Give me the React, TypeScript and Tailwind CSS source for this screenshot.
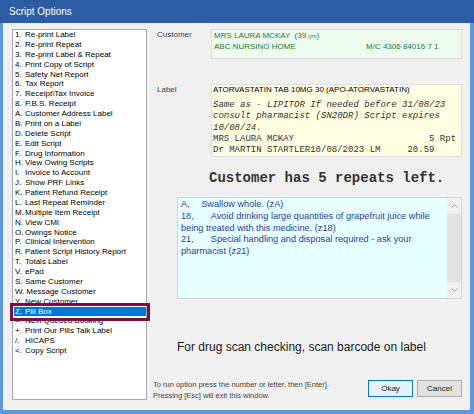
import React from "react";

const items: [string, string][] = [
  ["1.", "Re-print Label"],
  ["2.", "Re-print Repeat"],
  ["3.", "Re-print Label & Repeat"],
  ["4.", "Print Copy of Script"],
  ["5.", "Safety Net Report"],
  ["6.", "Tax Report"],
  ["7.", "Receipt\\Tax Invoice"],
  ["8.", "P.B.S. Receipt"],
  ["A.", "Customer Address Label"],
  ["B.", "Print on a Label"],
  ["D.", "Delete Script"],
  ["E.", "Edit Script"],
  ["F.", "Drug Information"],
  ["H.", "View Owing Scripts"],
  ["I.", "Invoice to Account"],
  ["J.", "Show PRF Links"],
  ["K.", "Patient Refund Receipt"],
  ["L.", "Last Repeat Reminder"],
  ["M.", "Multiple Item Receipt"],
  ["N.", "View CMI"],
  ["O.", "Owings Notice"],
  ["P.", "Clinical Intervention"],
  ["R.", "Patient Script History Report"],
  ["T.", "Totals Label"],
  ["V.", "ePad"],
  ["S.", "Same Customer"],
  ["W.", "Message Customer"],
  ["Y.", "New Customer"],
  ["Z.", "Pill Box"],
  ["=.", "Next Queued Booking"],
  ["+.", "Print Our Pills Talk Label"],
  ["/.", "HICAPS"],
  ["<.", "Copy Script"],
];

export default function App() {
  return (
    <div className="w-[474px] h-[414px] flex flex-col bg-[#5b98e0] font-['Liberation_Sans',Arial,sans-serif] overflow-hidden">
      <div className="h-[23px] bg-[#2c5ca3] text-white text-[10px] pl-[9px] flex items-center shrink-0">
        Script Options
      </div>
      <div className="flex-1 ml-[3px] mr-[4px] mb-[4px] bg-[#f0f0f0] flex">
        {/* List */}
        <div className="pl-[9px] pt-[6px] shrink-0">
          <div className="relative w-[135px] h-[371px] bg-white border border-[#a8a8a8] pl-[1px] text-[8px] text-black">
            {items.map(([k, t]) => {
              const sel = k === "Z.";
              return (
                <div
                  key={k}
                  className={
                    "h-[9.875px] leading-[9.875px] pl-[1px] whitespace-pre flex " +
                    (sel ? "bg-[#0078d7] text-white" : "")
                  }
                >
                  <span className={"inline-block min-w-[10px] " + (k === "W." ? "pr-[2px]" : "")}>{k}</span>
                  <span>{t}</span>
                </div>
              );
            })}
            <div className="absolute left-[-3px] top-[273px] w-[140px] h-[18px] border-[3px] border-[#7b0f45]" />
          </div>
        </div>
        {/* Right panel */}
        <div className="flex-1 flex flex-col text-[8px]">
          {/* Customer */}
          <div className="flex mt-[6px]">
            <div className="w-[64px] pl-[10px] pt-[1px] leading-[10px] text-[#404040]">Customer</div>
            <div className="w-[251px] h-[30px] bg-[#eefcf0] border border-[#dcdcdc] pl-[2px] pt-[1px] text-[#1f7a2e] leading-[9.5px]">
              <div className="whitespace-pre">
                MRS LAURA MCKAY  (39 <span className="text-[6px]">yrs</span>)
              </div>
              <div className="flex">
                <span className="w-[152px]">ABC NURSING HOME</span>
                <span>M/C 4306 84016 7 1</span>
              </div>
            </div>
          </div>
          {/* Label */}
          <div className="flex mt-[25px]">
            <div className="w-[64px] pl-[10px] pt-[1px] leading-[10px] text-[#404040]">Label</div>
            <div className="w-[251px] h-[73px] bg-[#fffde2] border border-[#dcdcdc] pl-[1px] pt-0 text-black">
              <div className="leading-[10px]">ATORVASTATIN TAB 10MG 30 (APO-ATORVASTATIN)</div>
              <div className="mt-[5px] font-['Liberation_Mono','Courier_New',monospace] text-[9px] leading-[11.3px] text-[#333] whitespace-pre">
                <div className="italic">Same as - LIPITOR If needed before 31/08/23</div>
                <div className="italic">consult pharmacist (SN20DR) Script expires</div>
                <div className="italic">10/08/24.</div>
                <div>MRS LAURA MCKAY                         5 Rpt</div>
                <div>Dr MARTIN STARTLER10/08/2023 LM     20.59</div>
              </div>
            </div>
          </div>
          {/* Repeats */}
          <div className="mt-[13px] pl-[62px] font-['Liberation_Mono','Courier_New',monospace] font-bold text-[14px] leading-[16px] text-[#333] whitespace-pre">
            Customer has 5 repeats left.
          </div>
          {/* Blue box */}
          <div className="mt-[11px] ml-[30px] w-[285px] h-[102px] bg-[#e6ffff] border border-[#d4d4d4] flex">
            <div className="flex-1 pl-[3px] pt-[1px] text-[9.2px] leading-[11.8px] text-[#2e3a9e]">
              <div className="whitespace-pre">
                A,<span className="pl-[11.5px]">Swallow whole. (zA)</span>
              </div>
              <div className="whitespace-pre">
                18,<span className="pl-[17px]">Avoid drinking large quantities of grapefruit juice while</span>
              </div>
              <div>being treated with this medicine. (z18)</div>
              <div className="whitespace-pre">
                21,<span className="pl-[17px]">Special handling and disposal required - ask your</span>
              </div>
              <div>pharmacist (z21)</div>
            </div>
            <div className="w-[14px] flex flex-col bg-[#f0f0f0]">
              <div className="h-[16px] flex items-center justify-center">
                <svg width="7" height="4" viewBox="0 0 7 4">
                  <path d="M0.5 3.5 L3.5 0.5 L6.5 3.5" fill="none" stroke="#a0a0a0" strokeWidth="1" />
                </svg>
              </div>
              <div className="flex-1 bg-[#e2e2e2]" />
              <div className="h-[16px] flex items-center justify-center">
                <svg width="7" height="4" viewBox="0 0 7 4">
                  <path d="M0.5 0.5 L3.5 3.5 L6.5 0.5" fill="none" stroke="#a0a0a0" strokeWidth="1" />
                </svg>
              </div>
            </div>
          </div>
          {/* Scan text */}
          <div className="mt-[41px] pl-[30px] text-[12px] leading-[14px] text-[#1a1a1a]">
            For drug scan checking, scan barcode on label
          </div>
          {/* Bottom row */}
          <div className="mt-[25px] flex items-start">
            <div className="pl-[6px] w-[221px] text-[7.5px] leading-[11px] text-[#444]">
              <div>To run option press the number or letter, then [Enter].</div>
              <div>Pressing [Esc] will exit this window.</div>
            </div>
            <button className="mt-[1px] w-[45px] h-[17px] bg-[#e5f1fb] border border-[#0078d7] text-[8px] text-[#222] flex items-center justify-center">
              Okay
            </button>
            <button className="mt-[1px] ml-[4px] w-[45px] h-[17px] bg-[#e1e1e1] border border-[#adadad] text-[8px] text-[#222] flex items-center justify-center">
              Cancel
            </button>
          </div>
        </div>
      </div>
    </div>
  );
}
